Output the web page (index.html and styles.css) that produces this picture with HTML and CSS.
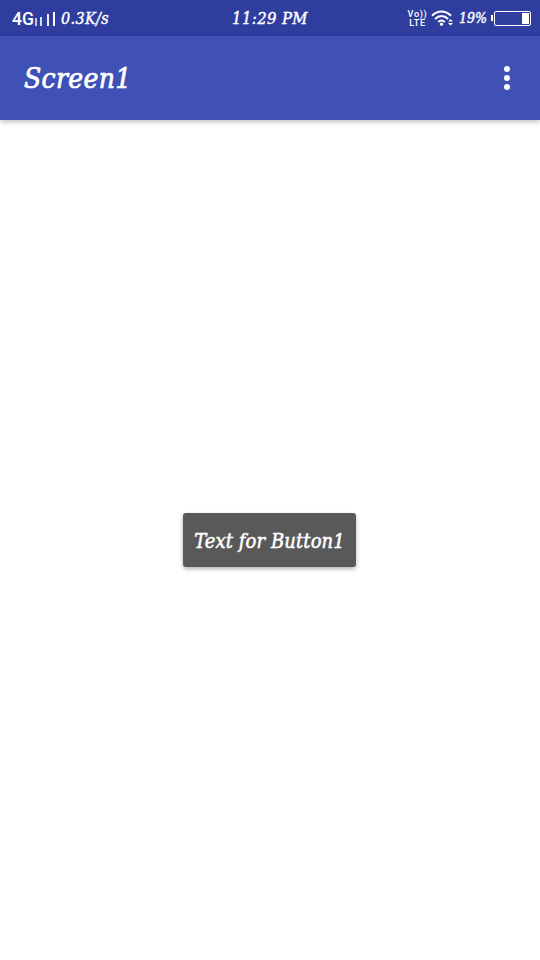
FILE: index.html
```html
<!DOCTYPE html>
<html>
<head>
  <title>Screen1</title>
  <link rel="stylesheet" href="styles.css">
</head>
<body>
  <div class="screen">
    <div class="status-bar">
      <div class="status-left">
        <span class="network">4G</span>
        <svg class="signal" width="21" height="14" viewBox="0 0 21 14">
          <rect x="0" y="6" width="2" height="8" fill="#b9c0e2"/>
          <rect x="5" y="5" width="2" height="9" fill="#d5d9ee"/>
          <rect x="12" y="2" width="2" height="12" fill="#eceefa"/>
          <rect x="18" y="0" width="2" height="14" fill="#fff"/>
        </svg>
        <span class="status-text speed">0.3K/s</span>
      </div>
      <div class="status-text clock">11:29 PM</div>
      <div class="status-right">
        <div class="volte"><span>Vo))</span><span>LTE</span></div>
        <svg class="wifi" width="23" height="16" viewBox="0 0 23 16" fill="none" stroke="#fff">
          <path d="M1 5.8 C6.5 0.2 14.5 0.2 20 5.8" stroke-width="2"/>
          <path d="M4 9 C8 5 13 5 17 9" stroke-width="2"/>
          <path d="M7.2 12 C9.2 10.2 11.8 10.2 13.8 12" stroke-width="2"/>
          <circle cx="10.5" cy="14.2" r="1.6" fill="#fff" stroke="none"/>
          <path d="M17 11.5 L19.5 9 L22 11.5 Z M17 13 L22 13 L19.5 15.5 Z" fill="#fff" stroke="none"/>
        </svg>
        <span class="status-text battery-text">19%</span>
        <div class="battery-tip"></div>
        <div class="battery"><div class="battery-level"></div></div>
      </div>
    </div>
    <div class="app-bar">
      <div class="title">Screen1</div>
      <div class="menu">
        <div class="dot"></div>
        <div class="dot"></div>
        <div class="dot"></div>
      </div>
    </div>
    <div class="content">
      <div class="button">Text for Button1</div>
    </div>
  </div>
</body>
</html>
```

FILE: styles.css
```css
html, body {
  margin: 0;
  height: 100%;
}

body {
  background-color: #ffffff;
  font-family: "DejaVu Serif Condensed", "DejaVu Serif", serif;
  font-style: italic;
  color: #ffffff;
}

.screen {
  display: flex;
  flex-direction: column;
  height: 960px;
  overflow: hidden;
}

.status-bar {
  display: grid;
  grid-template-columns: 1fr auto 1fr;
  align-items: center;
  height: 36px;
  padding: 0 9px 0 12px;
  background-color: #2f3e9e;
}

.status-left {
  display: flex;
  align-items: center;
}

.status-right {
  display: flex;
  align-items: center;
  justify-content: flex-end;
}

.network {
  font-family: Roboto, sans-serif;
  font-style: normal;
  font-weight: 500;
  font-size: 17.5px;
  line-height: 18px;
  margin-top: 2px;
}

.signal {
  margin-left: 1px;
  margin-top: 1px;
}

.status-text {
  font-size: 16px;
  -webkit-text-stroke: 0.4px #ffffff;
  letter-spacing: 0.4px;
}

.speed {
  margin-left: 5px;
}

.clock {
  margin-left: -3px;
  font-size: 16.5px;
}

.volte {
  display: flex;
  flex-direction: column;
  align-items: center;
  width: 17px;
  margin-top: 2px;
  font-family: Roboto, sans-serif;
  font-style: normal;
  font-size: 9px;
  font-weight: 500;
  line-height: 9px;
  letter-spacing: 0.7px;
}

.wifi {
  margin-left: 5px;
}

.battery-text {
  margin-left: 5px;
  font-size: 14px;
  letter-spacing: 0;
}

.battery-tip {
  width: 2px;
  height: 6px;
  margin-left: 4px;
  background-color: #ffffff;
}

.battery {
  display: flex;
  justify-content: flex-end;
  box-sizing: border-box;
  width: 37px;
  height: 15px;
  margin-left: 1px;
  padding: 1px;
  border: 1px solid #ffffff;
  border-radius: 2px;
}

.battery-level {
  width: 7px;
  background-color: #ffffff;
}

.app-bar {
  display: flex;
  align-items: center;
  justify-content: space-between;
  height: 84px;
  padding: 0 30px 0 24px;
  background-color: #3f51b5;
  box-shadow: 0 2px 5px rgba(0, 0, 0, 0.25);
  position: relative;
}

.title {
  font-size: 28px;
  letter-spacing: 0.3px;
  -webkit-text-stroke: 0.7px #ffffff;
}

.menu {
  display: flex;
  flex-direction: column;
  gap: 3px;
}

.dot {
  width: 6px;
  height: 6px;
  border-radius: 50%;
  background-color: #ffffff;
}

.content {
  flex: 1;
  display: flex;
  align-items: center;
  justify-content: center;
}

.button {
  display: flex;
  align-items: center;
  justify-content: center;
  box-sizing: border-box;
  width: 173px;
  height: 54px;
  margin-right: 1px;
  padding-top: 2px;
  background-color: #595959;
  border-radius: 3px;
  box-shadow: 0 2px 4px rgba(0, 0, 0, 0.3);
  font-size: 20px;
  letter-spacing: 0.1px;
  -webkit-text-stroke: 0.5px #ffffff;
}
```
